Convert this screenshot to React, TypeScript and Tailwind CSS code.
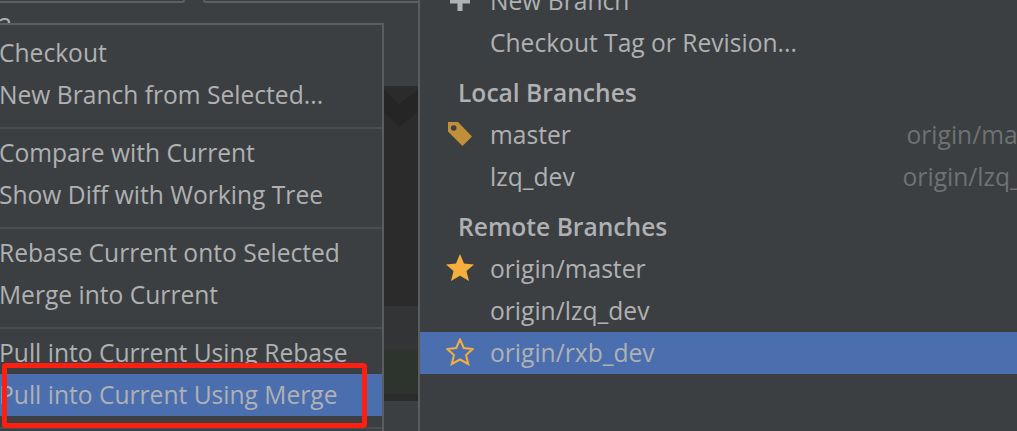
import type { ReactNode } from "react";

const menuGroups = [
  ["Checkout", "New Branch from Selected..."],
  ["Compare with Current", "Show Diff with Working Tree"],
  ["Rebase Current onto Selected", "Merge into Current"],
  ["Pull into Current Using Rebase", "Pull into Current Using Merge"],
];

function Tag() {
  return (
    <svg width="24" height="24" viewBox="0 0 24 24" className="mb-[2px] shrink-0">
      <path d="M0 0h10l14 14.500L14.500 24 0 9.500z" fill="#bf9039" />
      <circle cx="5.700" cy="6" r="2.800" fill="#3c3f41" />
    </svg>
  );
}

function Star({ filled }: { filled?: boolean }) {
  return (
    <svg width="28" height="28" viewBox="0 0 28 28" className="mb-[2px] shrink-0">
      {filled ? (
        <path d="M14 0l4 9.500 10 1-7.500 6.500 2.500 10-9-5.200L5 27l2.500-10L0 10.500l10-1z" fill="#f4af3d" />
      ) : (
        <path
          d="M14 1.500l3.800 8.500 8.900 1-6.700 6 2.200 9-8.200-4.500L5.800 26 8 17l-6.700-6 8.900-1z"
          fill="none"
          stroke="#f4af3d"
          strokeWidth="2"
        />
      )}
    </svg>
  );
}

function Branch({
  name,
  remote,
  icon,
  active,
}: {
  name: string;
  remote?: string;
  icon?: ReactNode;
  active?: boolean;
}) {
  return (
    <div className={`flex h-[42px] items-center pr-[18px] ${active ? "bg-[#4b6eaf]" : ""}`}>
      <div className="mr-[16px] ml-[26px] flex w-[28px] shrink-0 justify-center">{icon}</div>
      <span className="flex-1">{name}</span>
      {remote && <span className="text-[#6f7173]">{remote}</span>}
    </div>
  );
}

export default function App() {
  return (
    <div className="flex h-[431px] w-[1017px] overflow-hidden bg-[#3c3f41] font-['Open_Sans','Noto_Sans',sans-serif] text-[24.6px] leading-none text-[#afb1b3]">
      {/* linke Seite mit Kontextmenü */}
      <div className="relative h-full w-[420px] shrink-0 border-r-2 border-[#5b5d5f]">
        <div className="flex h-[3px] gap-[18px]">
          <div className="h-full w-[185px] rounded-br border-r-2 border-b-2 border-[#5e6060]" />
          <div className="h-full flex-1 rounded-bl border-l-2 border-b-2 border-[#5e6060]" />
        </div>
        <span className="absolute top-[15px] left-[-2px] block h-[8px] overflow-hidden">2</span>
        <div className="mt-[83px] h-[220px] bg-[#2b2b2b]">
          <svg width="418" height="50" viewBox="0 0 418 50">
            <path d="M384 4l15 14 19-14v22l-19 15-15-15z" fill="#252525" />
          </svg>
        </div>
        <div className="h-[44px] bg-[#333435]" />
        <div className="h-[44px] bg-[#2d342e]" />
        <div className="h-[7px] bg-[#2b2b2b]" />

        {/* Menü */}
        <div className="absolute top-[23px] left-[-3px] w-[387px] border-2 border-[#5b5d5f] bg-[#3c3f41] pt-[7px] whitespace-nowrap">
          {menuGroups.map((group, i) => (
            <div key={i} className="mb-[3px] border-b-2 border-[#4b4d4f] pb-[11px]">
              {group.map((label) => (
                <div
                  key={label}
                  className={`flex h-[42px] items-center ${label.endsWith("Merge") ? "bg-[#4b6eaf]" : ""}`}
                >
                  {label}
                </div>
              ))}
            </div>
          ))}
        </div>
        <div className="absolute top-[363px] left-[2px] h-[65px] w-[365px] rounded-[4px] border-[5px] border-[#fe1f10]" />
      </div>

      {/* Branch-Liste */}
      <div className="mt-[-20px] w-[660px] shrink-0">
        <Branch
          name="New Branch"
          icon={
            <svg width="20" height="20" viewBox="0 0 20 20">
              <path d="M7.500 0h5v7.500H20v5h-7.500V20h-5v-7.500H0v-5h7.500z" fill="#afb1b3" />
            </svg>
          }
        />
        <Branch name="Checkout Tag or Revision..." />
        <div className="mt-2 flex h-[42px] items-center pl-[38px] font-semibold">Local Branches</div>
        <Branch name="master" remote="origin/master" icon={<Tag />} />
        <Branch name="lzq_dev" remote="origin/lzq_dev" />
        <div className="mt-2 flex h-[42px] items-center pl-[38px] font-semibold">Remote Branches</div>
        <Branch name="origin/master" icon={<Star filled />} />
        <Branch name="origin/lzq_dev" />
        <Branch name="origin/rxb_dev" icon={<Star />} active />
      </div>
    </div>
  );
}
